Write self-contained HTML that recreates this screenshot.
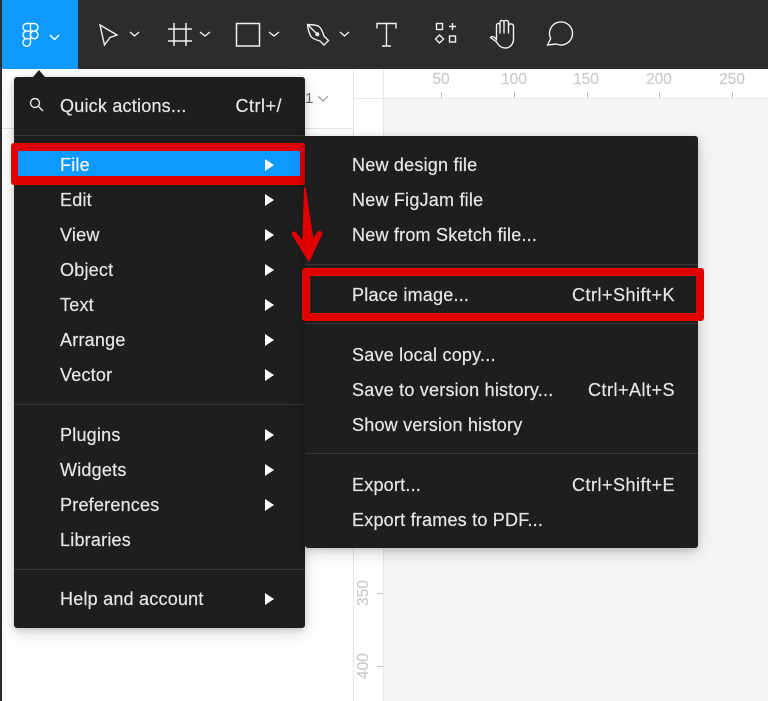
<!DOCTYPE html>
<html><head><meta charset="utf-8"><style>
html,body{margin:0;padding:0}
body{width:768px;height:701px;overflow:hidden;position:relative;background:#fff;font-family:"Liberation Sans",sans-serif}
#w{position:absolute;left:0;top:0;width:768px;height:701px;filter:blur(.35px)}
#w div{position:absolute}
#w .t{white-space:nowrap;color:#e6e6e6;font-size:18px;line-height:23px;letter-spacing:.22px;-webkit-text-stroke:.2px #e6e6e6}
#w .r{text-align:right;letter-spacing:.5px}
#w .tri{width:0;height:0;border-left:9px solid #fff;border-top:6px solid transparent;border-bottom:6px solid transparent;left:265px}
#w .sep{height:1px;background:#363636}
#w .rl{color:#cacaca;font-size:15.5px;line-height:16px;white-space:nowrap;text-align:center;width:40px;-webkit-text-stroke:.2px #cacaca}
#w .tick{background:#c0c0c0}
</style></head><body><div id="w">
<div style="left:383px;top:99px;width:385px;height:602px;background:#f5f5f5"></div>
<div style="left:353px;top:69px;width:1px;height:632px;background:#e6e6e6"></div>
<div style="left:383px;top:69px;width:1px;height:632px;background:#e6e6e6"></div>
<div style="left:353px;top:98px;width:415px;height:1px;background:#e6e6e6"></div>
<div style="left:0;top:128px;width:353px;height:1px;background:#e6e6e6"></div>
<div style="left:0;top:0;width:2px;height:701px;background:#2c2c2c"></div>
<div class="rl" style="left:421px;top:72px">50</div><div class="tick" style="left:441px;top:92px;width:1px;height:6px"></div>
<div class="rl" style="left:494px;top:72px">100</div><div class="tick" style="left:514px;top:92px;width:1px;height:6px"></div>
<div class="rl" style="left:566px;top:72px">150</div><div class="tick" style="left:587px;top:92px;width:1px;height:6px"></div>
<div class="rl" style="left:639px;top:72px">200</div><div class="tick" style="left:659px;top:92px;width:1px;height:6px"></div>
<div class="rl" style="left:712px;top:72px">250</div><div class="tick" style="left:732px;top:92px;width:1px;height:6px"></div>
<div class="rl" style="left:344px;top:585px;transform:rotate(-90deg)">350</div><div class="tick" style="left:377px;top:593px;width:6px;height:1px"></div>
<div class="rl" style="left:344px;top:658px;transform:rotate(-90deg)">400</div><div class="tick" style="left:377px;top:666px;width:6px;height:1px"></div>
<div style="left:305px;top:90px;color:#666;font-size:15px;line-height:18px">1</div>
<svg style="position:absolute;left:316px;top:93px" width="16" height="12"><path d="M2 3l5 5 5-5" fill="none" stroke="#999" stroke-width="1.2"/></svg>

<div style="left:0;top:0;width:768px;height:69px;background:#2c2c2c"></div>
<div style="left:2px;top:0;width:76px;height:69px;background:#0d99ff"></div>
<svg style="position:absolute;left:0;top:0" width="768" height="69" fill="none" stroke="#f0f0f0" stroke-width="1.4">
<g stroke="#fff"><path d="M30.500 23.500h-3.700a3.800 3.800 0 0 0 0 7.600h3.700zM30.500 23.500h3.700a3.800 3.800 0 0 1 0 7.600h-3.700zM30.500 31.100h-3.700a3.800 3.800 0 0 0 0 7.600h3.700zM30.500 38.700h-3.700a3.800 3.800 0 1 0 3.700 3.800z"/><circle cx="34.200" cy="34.900" r="3.800"/><path d="M50 35l4.500 4.500 4.500-4.500" stroke-width="1.500"/></g>
<path d="M100 25L117 35L110 37.500L104.500 45Z"/><path d="M130 32l4.500 4 4.500-4M200 32l5 4 5-4M269 32l5 4 5-4M340 32l4.500 4 4.500-4"/>
<path d="M174 23v23M186 23v23M168 29h24M168 41h24" stroke-width="1.500"/>
<rect x="236.500" y="23.500" width="23" height="22.500" stroke-width="1.500"/>
<path d="M307.500 24.500C312 25 316 24.500 319 26.500C322 29 323 33 324 36L328.500 40.500L324 45L320 41C316 40 313 39 311 36.500C309 33 308 29 307.500 24.500ZM307.500 24.500L317 34"/><circle cx="317.300" cy="34.300" r="1.300" fill="#f0f0f0"/>
<path d="M377 28.500v-5h19v5M386.500 23.500v22M382 46h9" stroke-width="1.400"/>
<rect x="436.500" y="23.500" width="6" height="6"/><path d="M449 26.500h7M452.500 23v7"/><path d="M439.500 35l-4 4 4 4 4-4z"/><rect x="449.500" y="36" width="6" height="6"/>
<path d="M490.500 37.500c1.200-1.500 3-1 4 0l2 2V25.500c0-2.800 3.500-2.800 3.500 0V22.500c0-2.800 4-2.800 4 0 0-2.800 4.500-2.800 4.500 0V26c0-2.800 5-2.800 5 0V39c0 5-3.500 9-8 9-5 0-7-3-9-6z"/><path d="M500 25.500v8M504 22.500v11M508.500 22.500v11"/>
<path d="M547.500 45L550.700 38.500A11.500 11.500 0 1 1 556.500 44Z"/>
</svg>

<div style="left:33px;top:70px;width:0;height:0;border-left:6px solid transparent;border-right:6px solid transparent;border-bottom:7px solid #1e1e1e"></div>

<div style="left:14px;top:77px;width:291px;height:551px;background:#1e1e1e;border-radius:3px;box-shadow:0 5px 17px rgba(0,0,0,.15),0 2px 7px rgba(0,0,0,.15)"></div>
<svg style="position:absolute;left:28px;top:96px" width="18" height="18" fill="none" stroke="#e6e6e6" stroke-width="1.400"><circle cx="7" cy="7" r="4.500"/><path d="M10.300 10.300L15 15"/></svg>
<div class="t" style="left:60px;top:95px">Quick actions...</div>
<div class="t r" style="right:486px;top:95px">Ctrl+/</div>
<div class="sep" style="left:14px;top:135px;width:291px"></div>

<div style="left:11px;top:143px;width:295px;height:42px;background:#e10000;border-radius:3px"></div>
<div style="left:18px;top:151px;width:282px;height:25px;background:#0d99ff"></div>
<div class="t" style="left:60px;top:154px;color:#fff">File</div><div class="tri" style="top:159px"></div>
<div class="t" style="left:60px;top:189px">Edit</div><div class="tri" style="top:194px"></div>
<div class="t" style="left:60px;top:224px">View</div><div class="tri" style="top:229px"></div>
<div class="t" style="left:60px;top:259px">Object</div><div class="tri" style="top:264px"></div>
<div class="t" style="left:60px;top:294px">Text</div><div class="tri" style="top:299px"></div>
<div class="t" style="left:60px;top:329px">Arrange</div><div class="tri" style="top:334px"></div>
<div class="t" style="left:60px;top:364px">Vector</div><div class="tri" style="top:369px"></div>
<div class="sep" style="left:14px;top:404px;width:291px"></div>
<div class="t" style="left:60px;top:424px">Plugins</div><div class="tri" style="top:429px"></div>
<div class="t" style="left:60px;top:459px">Widgets</div><div class="tri" style="top:464px"></div>
<div class="t" style="left:60px;top:494px">Preferences</div><div class="tri" style="top:499px"></div>
<div class="t" style="left:60px;top:529px">Libraries</div>
<div class="sep" style="left:14px;top:569px;width:291px"></div>
<div class="t" style="left:60px;top:588px">Help and account</div><div class="tri" style="top:593px"></div>

<div style="left:305px;top:136px;width:393px;height:412px;background:#1e1e1e;border-radius:0 3px 3px 3px;box-shadow:0 5px 17px rgba(0,0,0,.15),0 2px 7px rgba(0,0,0,.15)"></div>
<div class="t" style="left:352px;top:154px">New design file</div>
<div class="t" style="left:352px;top:189px">New FigJam file</div>
<div class="t" style="left:352px;top:224px">New from Sketch file...</div>
<div class="sep" style="left:305px;top:264px;width:393px"></div>
<div class="sep" style="left:305px;top:323px;width:393px"></div>
<div style="left:302px;top:268px;width:386px;height:37px;border:8px solid #e10000;border-radius:3px"></div>
<div class="t" style="left:352px;top:284px">Place image...</div>
<div class="t r" style="right:93px;top:284px">Ctrl+Shift+K</div>
<div class="t" style="left:352px;top:344px">Save local copy...</div>
<div class="t" style="left:352px;top:379px">Save to version history...</div>
<div class="t r" style="right:93px;top:379px">Ctrl+Alt+S</div>
<div class="t" style="left:352px;top:414px">Show version history</div>
<div class="sep" style="left:305px;top:453px;width:393px"></div>
<div class="t" style="left:352px;top:474px">Export...</div>
<div class="t r" style="right:93px;top:474px">Ctrl+Shift+E</div>
<div class="t" style="left:352px;top:509px">Export frames to PDF...</div>

<svg style="position:absolute;left:0;top:0" width="768" height="701"><path d="M304 187.300h1.700L313.300 238L318 231.300Q320 230.500 321.700 231.700L322.500 234L309 262.300L291.700 234.500Q291.500 232.500 293 231.700L295.500 231.500L302.300 240Z" fill="#e10000"/></svg>
</div></body></html>
